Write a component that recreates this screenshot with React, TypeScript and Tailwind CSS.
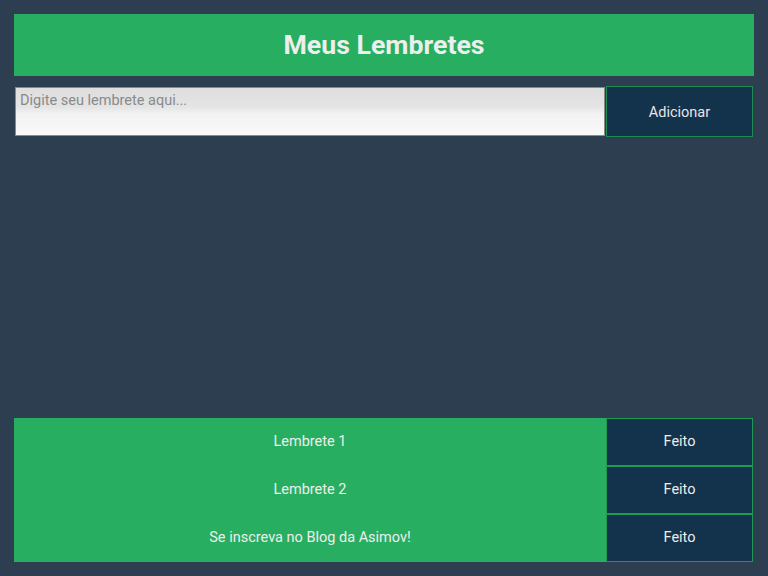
import React from "react";

export default function App() {
  const items = ["Lembrete 1", "Lembrete 2", "Se inscreva no Blog da Asimov!"];
  return (
    <div
      className="h-screen w-full bg-[#2c3e50] p-[14px] flex flex-col justify-between"
      style={{ fontFamily: "Roboto, 'Liberation Sans', sans-serif" }}
    >
      <div className="flex flex-col">
        <div className="h-[62px] bg-[#27ae60] flex items-center justify-center">
          <h1 className="text-[26.7px] font-bold text-[#eeeeee] leading-none">Meus Lembretes</h1>
        </div>
        <div className="mt-[10px] flex h-[51px]">
          <div className="w-[592px] py-[1px] pl-[1px] pr-[1px]">
            <input
              placeholder="Digite seu lembrete aqui..."
              className="w-full h-full border border-[#8a8a8a] bg-[linear-gradient(to_bottom,#dedede_0%,#e4e4e4_40%,#f2f2f2_55%,#f9f9f9_100%)] text-[14.5px] text-[#333] placeholder:text-[#8a8a8a] px-[4px] pb-[26px] pt-[3px] outline-none"
            />
          </div>
          <button className="w-[147px] h-[51px] pt-[2px] bg-[#13324b] border border-[#1f8a52] text-[#e6e6e6] text-[14.5px]">
            Adicionar
          </button>
        </div>
      </div>
      <div className="flex flex-col">
        {items.map((t) => (
          <div key={t} className="flex h-[48px]">
            <div className="w-[592px] bg-[#27ae60] flex items-center justify-center text-[14.5px] text-[#eeeeee]">
              {t}
            </div>
            <button className="w-[147px] h-[48px] bg-[#13324b] border border-[#1f9a55] text-[#ececec] text-[14.5px]">
              Feito
            </button>
          </div>
        ))}
      </div>
    </div>
  );
}
